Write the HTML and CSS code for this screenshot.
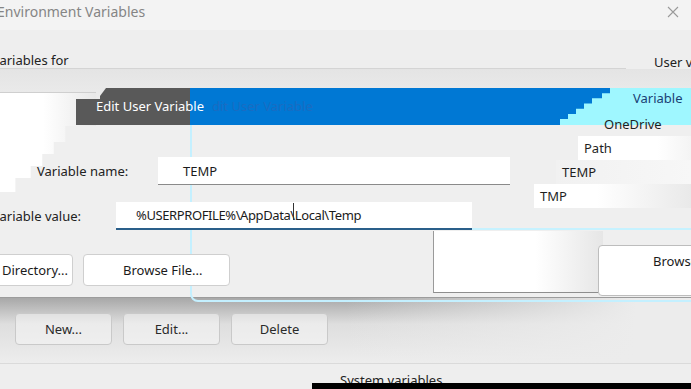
FILE: index.html
```html
<!DOCTYPE html>
<html lang="en">
<head>
    <meta charset="UTF-8">
    <title>Environment Variables</title>
    <link rel="stylesheet" href="styles.css">
</head>
<body>
<div class="screen">
    <!-- back window -->
    <section class="env-window">
        <header class="env-title">
            <span class="title-text">Environment Variables</span>
            <svg class="close" width="12" height="12" viewBox="0 0 12 12"><path d="M1 1L11 11M11 1L1 11" stroke="#9a9a9a" stroke-width="1.1" fill="none"/></svg>
        </header>
        <div class="user-head">
            <span class="cut-label">User variables for</span>
        </div>
        <div class="env-middle"></div>
        <div class="env-shadow">
            <div class="env-buttons">
                <span class="btn-ghost">New...</span>
                <span class="btn-ghost">Edit...</span>
                <span class="btn-ghost">Delete</span>
            </div>
        </div>
        <div class="sys-head">System variables</div>
    </section>

    <!-- fading list panel on the left -->
    <div class="left-list"></div>

    <!-- edit dialog -->
    <div class="edit-frame"></div>
    <div class="edit-bar">
        <div class="bar-cyan"></div>
        <div class="bar-tab"></div>
        <div class="bar-blue"><span class="bar-ghost">dit User Variable</span></div>
        <span class="bar-title">Edit User Variable</span>
    </div>

    <!-- right column of the user variable list -->
    <div class="right-head">User variables for</div>
    <div class="right-list">
        <div class="row row-head"><span>Variable</span></div>
        <div class="row row-1"><span>OneDrive</span></div>
        <div class="row row-2"><span>Path</span></div>
        <div class="row row-3"><span>TEMP</span></div>
        <div class="row row-4"><span>TMP</span></div>
    </div>

    <div class="edit-body">
        <div class="field field-name">
            <label class="field-label">Variable name:</label>
            <div class="input input-name">TEMP</div>
        </div>
        <div class="field field-value">
            <label class="field-label">Variable value:</label>
            <div class="input input-value">%USERPROFILE%\AppData\Local\Temp<i class="caret"></i></div>
            <div class="cyan-line"></div>
        </div>
        <div class="edit-buttons">
            <span class="btn btn-dir">Browse Directory...</span>
            <span class="btn btn-file">Browse File...</span>
        </div>
    </div>

    <div class="ghost-box"></div>
    <div class="btn btn-browse">Browse...</div>

    <div class="black-bar"></div>
</div>
</body>
</html>
```

FILE: styles.css
```css
*{
    margin:0;
    padding:0;
    box-sizing:border-box;
}
body{
    background:#eeeeee;
}
.screen{
    position:relative;
    width:691px;
    height:389px;
    overflow:hidden;
    background:#eeeeee;
    font-family:"Noto Sans","Open Sans",sans-serif;
    font-size:13px;
    color:#1b1b1b;
}

/* back window */
.env-window{
    position:absolute;
    left:0;
    top:0;
    width:691px;
    height:389px;
    display:flex;
    flex-direction:column;
}
.env-title{
    height:30px;
    background:#f3f3f3;
    display:flex;
    align-items:center;
    justify-content:space-between;
    padding:0 12px 6px 0;
}
.title-text{
    margin-left:-3px;
    font-size:14px;
    color:#858585;
}
.user-head{
    height:40px;
    display:flex;
    align-items:flex-end;
}
.cut-label{
    margin-left:-39px;
    line-height:14px;
    padding-bottom:1px;
    width:665px;
    border-bottom:1px solid #d4d4d4;
    color:#222;
    white-space:nowrap;
}
.env-middle{
    height:233px;
    background:linear-gradient(#e4e4e4,#efefef 20%);
}
.env-shadow{
    height:68px;
    border-top:1px solid #9c9c9c;
    background:
        linear-gradient(to right,rgba(238,238,238,0) 50%,#ececec 92%),
        linear-gradient(#a8a8a8,#dedede 40%,#ededed);
    border-bottom:1px solid #dadada;
}
.env-buttons{
    display:flex;
    gap:11px;
    padding:15px 0 0 15px;
}
.btn-ghost{
    width:97px;
    height:32px;
    display:flex;
    align-items:center;
    justify-content:center;
    border:1px solid #c9c9c9;
    border-radius:4px;
    background:rgba(246,246,246,0.55);
    color:#2a2a2a;
}
.sys-head{
    padding:7px 0 0 340px;
    color:#222;
}

/* left faded list */
.left-list{
    position:absolute;
    left:0;
    top:92px;
    width:96px;
    height:100px;
    background:linear-gradient(to right,#fff 45%,#e8e8e8);
    clip-path:polygon(0 0,100% 0,100% 34%,68% 34%,68% 50%,56% 50%,56% 62%,44% 62%,44% 74%,32% 74%,32% 86%,16% 86%,16% 100%,0 100%);
    border-top:1px solid #cfcfcf;
}

/* right list */
.right-head{
    position:absolute;
    left:654px;
    top:53px;
    color:#222;
    white-space:nowrap;
}
.right-list{
    position:absolute;
    left:0;
    top:84px;
    width:691px;
}
.row{
    height:24px;
    display:flex;
    align-items:center;
    white-space:nowrap;
}
.row span{
    color:#1f1f1f;
}
.row-head{
    height:28px;
    padding-left:633px;
}
.row-head span{
    color:#1a3f74;
}
.row-1{
    padding-left:604px;
}
.row-2{
    margin-left:578px;
    padding-left:6px;
    background:linear-gradient(to right,#fff 70%,#f4f4f4);
}
.row-3{
    margin-left:556px;
    padding-left:6px;
    background:linear-gradient(to right,#f1f1f1,#f7f7f7);
}
.row-4{
    margin-left:534px;
    padding-left:6px;
    background:linear-gradient(to right,#fff 40%,#e9e9e9);
}

/* edit dialog */
.edit-frame{
    position:absolute;
    left:190px;
    top:88px;
    width:530px;
    height:214px;
    border:2px solid #c4f0ff;
    border-radius:8px;
}
.edit-bar{
    position:absolute;
    left:0;
    top:88px;
    width:691px;
    height:37px;
}
.bar-cyan{
    position:absolute;
    left:560px;
    top:0;
    width:131px;
    height:37px;
    background:#9ff7ff;
}
.bar-tab{
    position:absolute;
    left:76px;
    top:0;
    width:114px;
    height:37px;
    background:#595959;
    clip-path:polygon(30px 0,100% 0,100% 100%,0 100%,0 30%,24px 30%,24px 8px);
    border-top-left-radius:10px;
}
.bar-blue{
    position:absolute;
    left:190px;
    top:0;
    width:440px;
    height:37px;
    padding:9px 0 0 22px;
    background:#0078d4;
    white-space:nowrap;
    clip-path:polygon(0 0,420px 0,420px 14%,412px 14%,412px 28%,402px 28%,402px 42%,394px 42%,394px 56%,386px 56%,386px 70%,378px 70%,378px 84%,370px 84%,370px 100%,0 100%);
}
.bar-ghost{
    color:#1a6cc2;
}
.bar-title{
    position:absolute;
    left:96px;
    top:9px;
    color:#fff;
    white-space:nowrap;
}

.edit-body{
    position:absolute;
    left:0;
    top:157px;
    width:691px;
}
.field{
    display:flex;
    align-items:center;
    height:28px;
}
.field-name{
    padding-left:37px;
}
.field-value{
    margin-top:17px;
    position:relative;
}
.field-label{
    color:#222;
    white-space:nowrap;
}
.field-name .field-label{
    width:121px;
}
.field-value .field-label{
    margin-left:-8px;
    width:124px;
}
.input{
    height:28px;
    background:#fff;
    display:flex;
    align-items:center;
    white-space:nowrap;
}
.input-name{
    width:352px;
    padding-left:25px;
    border-bottom:1px solid #8a8a8a;
}
.input-value{
    width:356px;
    padding-left:20px;
    border-bottom:2px solid #2a5f8a;
    position:relative;
    letter-spacing:-0.4px;
}
.caret{
    position:absolute;
    left:177px;
    top:1px;
    width:1px;
    height:17px;
    background:#333;
}
.cyan-line{
    flex:1;
    align-self:flex-end;
    height:2px;
    background:#c6f2ff;
}
.edit-buttons{
    display:flex;
    gap:10px;
    margin-top:24px;
    margin-left:-10px;
}
.btn{
    height:32px;
    display:flex;
    align-items:center;
    border:1px solid #cfcfcf;
    border-radius:4px;
    background:#fff;
    color:#1b1b1b;
    white-space:nowrap;
}
.btn-dir{
    width:83px;
    justify-content:flex-end;
    padding-right:4px;
    overflow:hidden;
}
.btn-file{
    width:147px;
    padding-left:39px;
}
.ghost-box{
    position:absolute;
    left:433px;
    top:231px;
    width:170px;
    height:62px;
    background:linear-gradient(to right,#fff 60%,#e6e6e6);
    border-bottom:1px solid #8e8e8e;
    border-left:1px solid #9a9a9a;
}
.btn-browse{
    position:absolute;
    left:598px;
    top:245px;
    width:110px;
    height:51px;
    align-items:flex-start;
    padding:6px 0 0 54px;
    border-color:#bdbdbd;
}
.black-bar{
    position:absolute;
    left:312px;
    top:383px;
    width:379px;
    height:6px;
    background:#000;
}
```
